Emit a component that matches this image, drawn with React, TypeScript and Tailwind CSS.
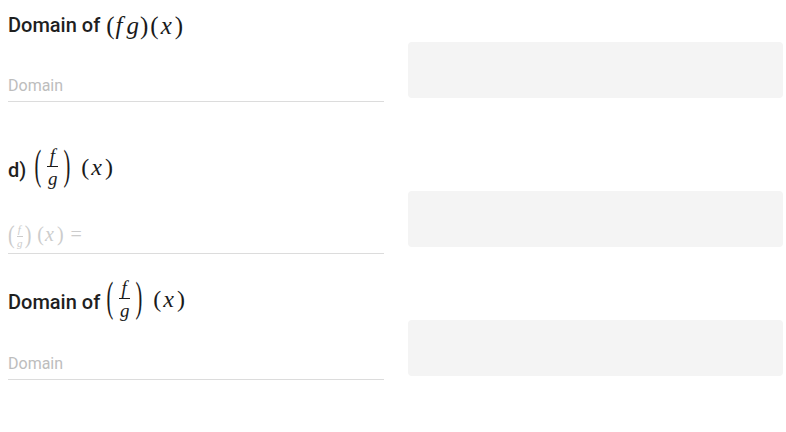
import React from "react";

const serif = { fontFamily: '"Liberation Serif", "Times New Roman", serif' } as const;

function Frac({ size, barW, gap }: { size: string; barW: string; gap?: string }) {
  return (
    <span className={`inline-flex flex-col items-center leading-none ${size}`}>
      <span className="italic leading-none pr-[1px]">f</span>
      <span className={`block h-px bg-current ${barW} ${gap ?? "my-[2px]"}`} />
      <span className="italic leading-none">g</span>
    </span>
  );
}

function BigParenFrac() {
  return (
    <span className="inline-flex items-center text-[24px] text-[#1a1a1a] mb-[7px]" style={serif}>
      <span className="inline-block scale-y-[1.75] scale-x-[0.85] leading-none -translate-y-[2px]">(</span>
      <span className="mx-[5px] -translate-y-[5px]">
        <Frac size="text-[19px]" barW="w-[11px]" gap="mt-[1px] mb-[2px]" />
      </span>
      <span className="inline-block scale-y-[1.75] scale-x-[0.85] leading-none -translate-y-[2px]">)</span>
      <span className="ml-[10px] leading-none">(</span>
      <span className="italic leading-none ml-[2px] mr-[3px]">x</span>
      <span className="leading-none">)</span>
    </span>
  );
}

function Underlined({ children, h, pb }: { children: React.ReactNode; h: string; pb: string }) {
  return (
    <div className={`${h} ${pb} flex items-end border-b border-[#dcdcdc]`}>{children}</div>
  );
}

function Box() {
  return <div className="h-[56px] rounded-[4px] bg-[#f4f4f4]" />;
}

export default function App() {
  const sans = { fontFamily: 'Roboto, "Liberation Sans", Arial, sans-serif' } as const;
  return (
    <div className="w-[786px] h-[432px] bg-white pl-2 pr-[3px] text-[#1f1f1f]" style={sans}>
      {/* Section 1 */}
      <div className="h-[42px] pt-[8px] flex items-center">
        <span className="text-[20px] font-medium">Domain of</span>
        <span className="ml-[6px] text-[25px] text-[#1a1a1a] leading-none" style={serif}>
          (<span className="italic ml-[1px] mr-[4px]">f</span>
          <span className="italic mr-[1px]">g</span>)<span className="ml-[2px]">(</span>
          <span className="italic ml-[2px] mr-[3px]">x</span>)
        </span>
      </div>
      <div className="grid grid-cols-2 gap-x-6">
        <Underlined h="h-[60px]" pb="pb-[3px]">
          <span className="text-[16px] text-[#bdbdbd]">Domain</span>
        </Underlined>
        <Box />
      </div>

      {/* Section 2 */}
      <div className="mt-[43px] h-[46px] pt-[4px] flex items-center">
        <span className="text-[20px] font-medium mr-[8px]">d)</span>
        <BigParenFrac />
      </div>
      <div className="grid grid-cols-2 gap-x-6">
        <Underlined h="h-[63px]" pb="pb-[3px]">
          <span className="inline-flex items-center text-[#cccccc] text-[20px] leading-none" style={serif}>
            <span className="inline-block scale-y-[1.3] leading-none">(</span>
            <span className="mx-[2px] -translate-y-[1px]">
              <Frac size="text-[11px]" barW="w-[6px]" gap="my-[1px]" />
            </span>
            <span className="inline-block scale-y-[1.3] leading-none">)</span>
            <span className="ml-[6px]">(</span>
            <span className="italic ml-[1px] mr-[3px]">x</span>
            <span>)</span>
            <span className="ml-[7px]">=</span>
          </span>
        </Underlined>
        <Box />
      </div>

      {/* Section 3 */}
      <div className="mt-[26px] h-[40px] pt-[4px] flex items-center">
        <span className="text-[20px] font-medium mr-[6px]">Domain of</span>
        <BigParenFrac />
      </div>
      <div className="grid grid-cols-2 gap-x-6">
        <Underlined h="h-[60px]" pb="pb-[3px]">
          <span className="text-[16px] text-[#bdbdbd]">Domain</span>
        </Underlined>
        <Box />
      </div>
    </div>
  );
}
